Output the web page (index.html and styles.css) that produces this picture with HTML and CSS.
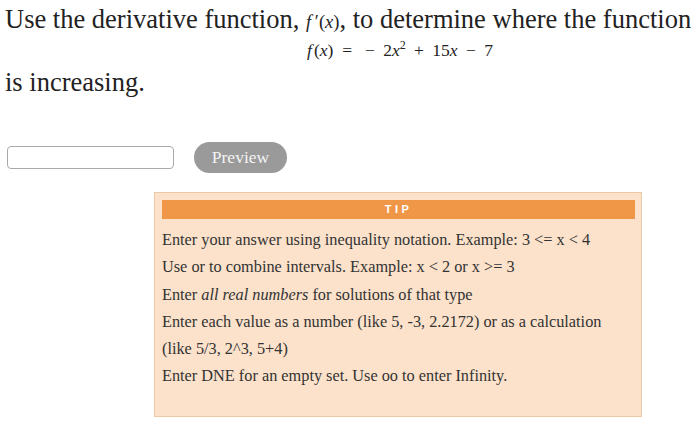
FILE: index.html
```html
<!DOCTYPE html>
<html>
<head>
<meta charset="utf-8">
<link rel="stylesheet" href="styles.css">
</head>
<body>
<div class="page">
  <div class="question">
    <div class="line">Use the derivative function, <span class="imath"><i>f</i>&#8201;′(<i>x</i>)</span>, to determine where the function</div>
    <div class="formula"><i class="fn">f</i>(<i>x</i>) <span class="rel">=</span> <span class="bin">−</span> 2<i>x</i><sup>2</sup> <span class="bin">+</span> 15<i>x</i> <span class="bin">−</span> 7</div>
    <div class="line">is increasing.</div>
  </div>
  <div class="answer-row">
    <input class="answer" type="text">
    <button class="preview">Preview</button>
  </div>
  <div class="tip">
    <div class="tip-title">TIP</div>
    <div class="tip-body">
      <div>Enter your answer using inequality notation. Example: 3 &lt;= x &lt; 4</div>
      <div>Use or to combine intervals. Example: x &lt; 2 or x &gt;= 3</div>
      <div>Enter <i>all real numbers</i> for solutions of that type</div>
      <div>Enter each value as a number (like 5, -3, 2.2172) or as a calculation</div>
      <div>(like 5/3, 2^3, 5+4)</div>
      <div>Enter DNE for an empty set. Use oo to enter Infinity.</div>
    </div>
  </div>
</div>
</body>
</html>
```
FILE: styles.css
```css
html, body {
  margin: 0;
  padding: 0;
  background: #ffffff;
}
.page {
  padding: 5px 0 0 5px;
  font-family: "Liberation Serif", "Times New Roman", serif;
  color: #222222;
}
.question {
  font-size: 26.5px;
}
.line {
  line-height: 28px;
  height: 28px;
  white-space: nowrap;
}
.imath {
  font-size: 18.5px;
}
.formula {
  font-size: 17.5px;
  line-height: 20px;
  height: 20px;
  margin: 7px 0 8px 0;
  padding-left: 302px;
  white-space: nowrap;
}
.formula .fn {
  padding-right: 2px;
}
.formula sup {
  font-size: 12px;
  line-height: 0;
  vertical-align: 7px;
}
.formula .rel {
  padding: 0 4.5px;
}
.formula .bin {
  padding: 0 4px;
}
.answer-row {
  display: flex;
  align-items: center;
  gap: 20px;
  margin-top: 46px;
  padding-left: 2px;
}
.answer {
  box-sizing: border-box;
  width: 167px;
  height: 23px;
  border: 1px solid #aaaaaa;
  border-radius: 4px;
  margin: 0;
  padding: 0;
  background: #ffffff;
}
.preview {
  box-sizing: border-box;
  width: 93px;
  height: 31px;
  border: none;
  border-radius: 16px;
  background: #9a9a9a;
  color: #f4f4f4;
  font-family: "Liberation Serif", "Times New Roman", serif;
  font-size: 17.5px;
  padding: 0;
  margin: 0;
}
.tip {
  box-sizing: border-box;
  width: 488px;
  height: 225px;
  margin: 19px 0 0 149px;
  padding: 7px 6px 0 7px;
  background: #fce2cb;
  border: 1px solid #ebc8a6;
}
.tip-title {
  height: 19px;
  line-height: 19px;
  background: #ef9747;
  color: #ffffff;
  font-family: "Liberation Sans", Arial, sans-serif;
  font-weight: bold;
  font-size: 11px;
  letter-spacing: 3.5px;
  text-align: center;
}
.tip-body {
  margin-top: 7px;
  font-size: 16.3px;
  line-height: 27.3px;
  color: #333333;
}
```
